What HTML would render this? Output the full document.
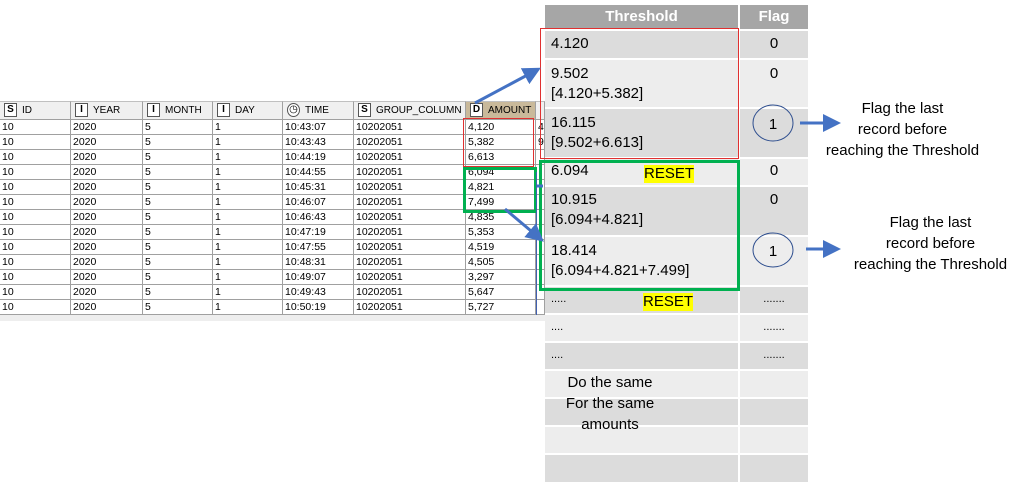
<!DOCTYPE html>
<html><head><meta charset="utf-8"><style>
body{margin:0;width:1024px;height:496px;background:#fff;position:relative;overflow:hidden;font-family:"Liberation Sans",sans-serif}
.a{position:absolute}
.c{position:absolute;font-size:10.5px;color:#000;white-space:nowrap;overflow:hidden;line-height:15px;padding-left:2px;box-sizing:border-box;border-right:1px solid #a0a0a0;border-bottom:1px solid #a0a0a0}
.h{position:absolute;height:19px;top:101px;background:#f0f0f0;border-right:1px solid #a0a0a0;border-bottom:1px solid #a0a0a0;border-top:1px solid #c0c0c0;box-sizing:border-box;font-size:10px;line-height:17px;padding-left:4px;white-space:nowrap;overflow:hidden}
.ic{display:inline-block;width:11px;height:12px;border:1px solid #555;background:#fff;font-size:10px;line-height:12px;text-align:center;font-weight:bold;margin-right:5px;vertical-align:middle}
.r{position:absolute;left:545px;width:193px;font-size:15px;color:#000;padding-left:6px;box-sizing:border-box;line-height:20px}
.f{position:absolute;left:740px;width:68px;font-size:15px;text-align:center;line-height:20px}
.d{background:#dcdcdc}.l{background:#ededed}
.ann{position:absolute;font-size:15px;text-align:center;line-height:21px;color:#000}
.y{background:#ffff00}
</style></head><body>
<div class="a" style="left:0;top:315px;width:545px;height:6px;background:#eee"></div>
<div id="lt"></div>
<script>
var cols=[0,71,143,213,283,354,466,536,545];
var hd=[["S","ID"],["I","YEAR"],["I","MONTH"],["I","DAY"],["T","TIME"],["S","GROUP_COLUMN"],["D","AMOUNT"],["",""]];
var times=["10:43:07","10:43:43","10:44:19","10:44:55","10:45:31","10:46:07","10:46:43","10:47:19","10:47:55","10:48:31","10:49:07","10:49:43","10:50:19"];
var am=["4,120","5,382","6,613","6,094","4,821","7,499","4,835","5,353","4,519","4,505","3,297","5,647","5,727"];
var ex=["4,","9,","","","","","","","","","","",""];
var h="";
for(var i=0;i<8;i++){var w=cols[i+1]-cols[i];var bg=i==6?"#c9b99a":"#f0f0f0";
var ic=hd[i][0]=="T"?'<span class="ic" style="border-radius:50%;font-weight:normal">&#x25F7;</span>':(hd[i][0]?'<span class="ic">'+hd[i][0]+'</span>':'');
h+='<div class="h" style="left:'+cols[i]+'px;width:'+w+'px;background:'+bg+'">'+ic+hd[i][1]+'</div>';}
for(var r=0;r<13;r++){var vals=["10","2020","5","1",times[r],"10202051",am[r],ex[r]];
for(var i=0;i<8;i++){var w=cols[i+1]-cols[i];
h+='<div class="c" style="left:'+cols[i]+'px;top:'+(120+r*15)+'px;width:'+w+'px;height:15px">'+vals[i]+'</div>';}}
document.getElementById("lt").outerHTML=h;
</script>
<div class="a" style="left:545px;top:5px;width:193px;height:24px;background:#a6a6a6;color:#fff;font-weight:bold;font-size:15px;text-align:center;line-height:24px">Threshold</div>
<div class="a" style="left:740px;top:5px;width:68px;height:24px;background:#a6a6a6;color:#fff;font-weight:bold;font-size:15px;text-align:center;line-height:24px">Flag</div>

<div class="r d" style="top:31px;height:27px;padding-top:3px">4.120</div>
<div class="f d" style="top:31px;height:27px;padding-top:3px;box-sizing:border-box">0</div>
<div class="r l" style="top:60px;height:47px;padding-top:4px">9.502<br>[4.120+5.382]</div>
<div class="f l" style="top:60px;height:47px;padding-top:4px;box-sizing:border-box">0</div>
<div class="r d" style="top:109px;height:48px;padding-top:4px">16.115<br>[9.502+6.613]</div>
<div class="f d" style="top:109px;height:48px"></div>
<div class="r l" style="top:159px;height:26px;padding-top:2px">6.094<span class="y" style="position:absolute;left:99px;top:6px;line-height:18px">RESET</span></div>
<div class="f l" style="top:159px;height:26px;padding-top:2px;box-sizing:border-box">0</div>
<div class="r d" style="top:187px;height:48px;padding-top:3px">10.915<br>[6.094+4.821]</div>
<div class="f d" style="top:187px;height:48px;padding-top:3px;box-sizing:border-box">0</div>
<div class="r l" style="top:237px;height:48px;padding-top:4px">18.414<br>[6.094+4.821+7.499]</div>
<div class="f l" style="top:237px;height:48px"></div>
<div class="r d" style="top:287px;height:26px;padding-top:2px;font-size:11px">.....<span class="y" style="position:absolute;left:98px;top:6px;line-height:18px;font-size:15px">RESET</span></div>
<div class="f d" style="top:287px;height:26px;padding-top:2px;box-sizing:border-box;font-size:11px">.......</div>
<div class="r l" style="top:315px;height:26px;padding-top:2px;font-size:11px">....</div>
<div class="f l" style="top:315px;height:26px;padding-top:2px;box-sizing:border-box;font-size:11px">.......</div>
<div class="r d" style="top:343px;height:26px;padding-top:2px;font-size:11px">....</div>
<div class="f d" style="top:343px;height:26px;padding-top:2px;box-sizing:border-box;font-size:11px">.......</div>
<div class="r l" style="top:371px;height:26px"></div><div class="f l" style="top:371px;height:26px"></div>
<div class="r d" style="top:399px;height:26px"></div><div class="f d" style="top:399px;height:26px"></div>
<div class="r l" style="top:427px;height:26px"></div><div class="f l" style="top:427px;height:26px"></div>
<div class="r d" style="top:455px;height:27px"></div><div class="f d" style="top:455px;height:27px"></div>
<div class="ann" style="left:560px;top:372px;width:100px">Do the same<br>For the same<br>amounts</div>

<div class="a" style="left:540px;top:28px;width:197px;height:129px;border:1px solid #e03030"></div>
<div class="a" style="left:463px;top:118px;width:71px;height:49px;border:1px solid #e03030;box-sizing:border-box"></div>
<div class="a" style="left:463px;top:167px;width:74px;height:46px;border:3px solid #00b050;box-sizing:border-box"></div>
<div class="a" style="left:539px;top:160px;width:201px;height:131px;border:3px solid #00b050;box-sizing:border-box"></div>
<div class="a" style="left:536px;top:172px;width:1px;height:143px;background:#4060b0"></div>

<svg class="a" style="left:0;top:0" width="1024" height="496">
<defs><marker id="m" markerWidth="6" markerHeight="6" refX="3" refY="3" orient="auto"><path d="M0,0L6,3L0,6z" fill="#4472c4"/></marker></defs>
<g stroke="#4472c4" stroke-width="3" fill="none">
<line x1="475" y1="103" x2="533" y2="72" marker-end="url(#m)"/>
<line x1="505" y1="209" x2="537" y2="236" marker-end="url(#m)"/>
<line x1="800" y1="123" x2="832" y2="123" marker-end="url(#m)"/>
<line x1="806" y1="249" x2="832" y2="249" marker-end="url(#m)"/>
<line x1="537" y1="186" x2="543" y2="186"/>
</g>
<g stroke="#2f4f8f" stroke-width="1" fill="none">
<ellipse cx="773" cy="123" rx="20" ry="18"/>
<ellipse cx="773" cy="250" rx="20" ry="17"/>
</g>
<text x="773" y="129" font-size="15" text-anchor="middle" font-family="Liberation Sans">1</text>
<text x="773" y="256" font-size="15" text-anchor="middle" font-family="Liberation Sans">1</text>
</svg>

<div class="ann" style="left:810px;top:98px;width:185px">Flag the last<br>record before<br>reaching the Threshold</div>
<div class="ann" style="left:838px;top:212px;width:185px">Flag the last<br>record before<br>reaching the Threshold</div>
</body></html>
